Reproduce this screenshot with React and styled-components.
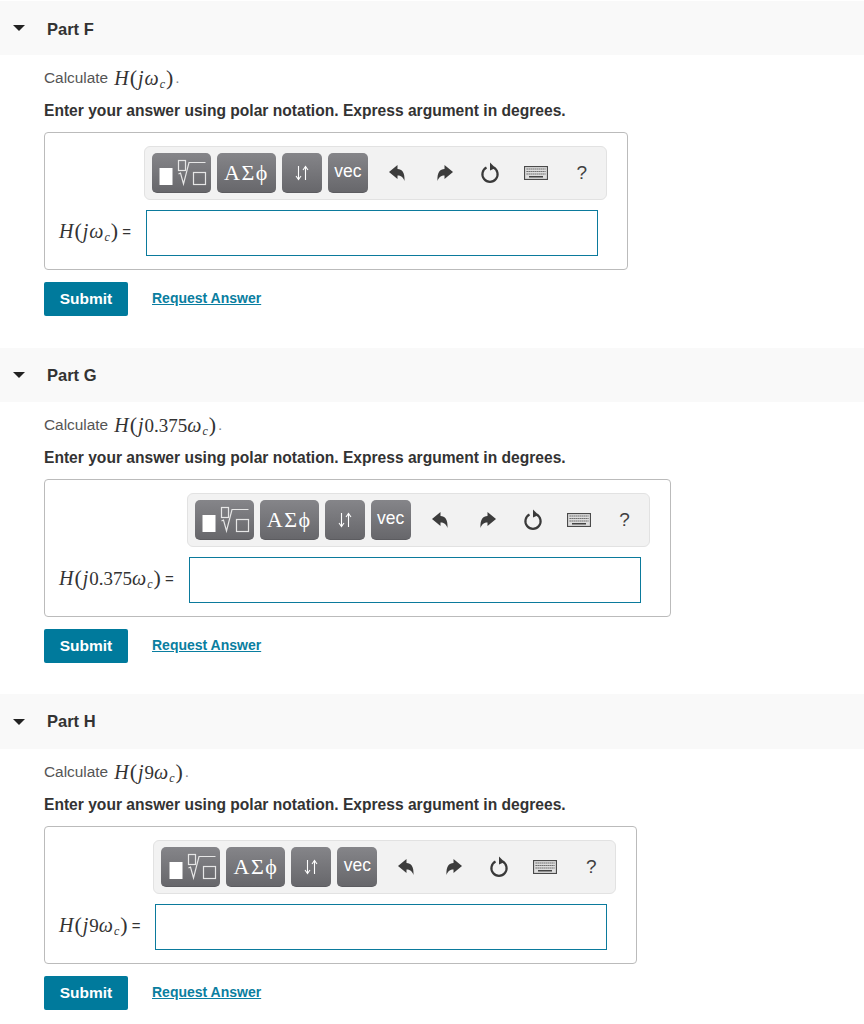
import React from 'react'
import styled, { createGlobalStyle } from 'styled-components'

const Global = createGlobalStyle`
    body{
        margin: 0;
        background: #fff;
        font-family: "Liberation Sans", Arial, sans-serif;
        color: #333;
    }
`;

const parts = [
    { name: 'Part F', number: '' },
    { name: 'Part G', number: '0.375' },
    { name: 'Part H', number: '9' },
]

const App = () =>{
    return(
        <Page>
            <Global/>
            {parts.map((part) => (
                <Part key={part.name} part={part}/>
            ))}
        </Page>
    )
}

const Part = ({part}) =>{
    return(
        <Section>
            <Header>
                <Caret/>
                <Title>{part.name}</Title>
            </Header>
            <Body>
                <Question>Calculate <Formula part={part}/><Dot>.</Dot></Question>
                <Instruction>Enter your answer using polar notation. Express argument in degrees.</Instruction>
                <AnswerBox>
                    <Toolbar>
                        <Tools/>
                    </Toolbar>
                    <Label><Formula part={part}/><Equals>=</Equals></Label>
                    <AnswerInput/>
                </AnswerBox>
                <Actions>
                    <Submit>Submit</Submit>
                    <RequestLink href="#">Request Answer</RequestLink>
                </Actions>
            </Body>
        </Section>
    )
}

const Formula = ({part}) =>{
    return(
        <MathText><I>H</I><Paren>(</Paren><I>j</I><Digits>{part.number}</Digits><I>ω</I><Sub>c</Sub><Paren>)</Paren></MathText>
    )
}

const Tools = () =>{
    return(
        <>
            <ToolButton $w={59}><TemplateIcon/></ToolButton>
            <ToolButton $w={59} $serif>ΑΣϕ</ToolButton>
            <ToolButton $w={40}><ArrowsIcon/></ToolButton>
            <ToolButton $w={40} $small>vec</ToolButton>
            <Plain $ml={8}><UndoIcon/></Plain>
            <Plain $ml={18}><RedoIcon/></Plain>
            <Plain $ml={15}><ResetIcon/></Plain>
            <Plain $ml={16}><KeyboardIcon/></Plain>
            <Help>?</Help>
        </>
    )
}

const TemplateIcon = () => (
    <svg width="52" height="34" viewBox="0 0 52 34">
        <rect x="4.500" y="12" width="13" height="17" fill="#fff"/>
        <g fill="none" stroke="#e6e6e6" strokeWidth="1.200">
            <rect x="23.500" y="4.500" width="7" height="10"/>
            <rect x="38.500" y="16.500" width="12" height="12"/>
            <path d="M23.500 18l2-1 3 11 5.500-21.500h16.500"/>
        </g>
    </svg>
)

const ArrowsIcon = () => (
    <svg width="18" height="18" viewBox="0 0 18 18" fill="none" stroke="#fff" strokeWidth="1.1">
        <path d="M5.500 2v13M3 12l2.500 3.500 2.500-3.500"/>
        <path d="M12.500 16V3M10 6l2.500-3.500 2.500 3.500"/>
    </svg>
)

const UndoIcon = () => (
    <svg width="18" height="18" viewBox="0 0 18 18">
        <path d="M1 8 9.500 1v4C14 5 17 8.500 16.500 17 15 13 13 11.500 9.500 11.500V15z" fill="#3c3c3c"/>
    </svg>
)

const RedoIcon = () => (
    <svg width="18" height="18" viewBox="0 0 18 18">
        <path d="M17 8 8.500 1v4C4 5 1 8.500 1.500 17 3 13 5 11.500 8.500 11.500V15z" fill="#3c3c3c"/>
    </svg>
)

const ResetIcon = () => (
    <svg width="20" height="22" viewBox="0 0 20 22">
        <path d="M6.500 5.500a7.600 7.600 0 1 0 7 0" fill="none" stroke="#3a3a3a" strokeWidth="2.200"/>
        <path d="M10 .5 15.500 6 10 8.500z" fill="#3a3a3a"/>
    </svg>
)

const KeyboardIcon = () => (
    <svg width="24" height="14" viewBox="0 0 24 14">
        <rect x="0.500" y="0.500" width="23" height="13" fill="#ddd" stroke="#4a4a4a" strokeWidth="1.200"/>
        <path d="M2.500 3h19M2.500 5.500h19M2.500 8h19" stroke="#555" strokeWidth="1.200" strokeDasharray="1.300 .7"/>
        <rect x="5" y="10" width="14" height="1.500" fill="#444"/>
    </svg>
)

//Styled-Components-CSS
const Page = styled.div`
    width: 864px;
    height: 1024px;
    overflow: hidden;
    padding-top: 1px;
    box-sizing: border-box;
`;

const Section = styled.section`
    height: 347px;
`;

const Header = styled.div`
    height: 54px;
    background: #f9f9f9;
    display: flex;
    align-items: center;
    padding-left: 13px;
    section:last-child > &{
        height: 55px;
        margin-top: -1px;
    }
`;

const Caret = styled.div`
    width: 0;
    height: 0;
    border-left: 6px solid transparent;
    border-right: 6px solid transparent;
    border-top: 6px solid #222;
`;

const Title = styled.h2`
    margin: 0 0 0 22px;
    font-size: 16.5px;
    font-weight: bold;
    color: #333;
    section:first-child &{
        padding-top: 2px;
    }
`;

const Body = styled.div`
    padding-left: 44px;
    section:first-child > &{
        padding-top: 1px;
    }
`;

const Question = styled.div`
    margin-top: 10px;
    height: 26px;
    display: flex;
    align-items: center;
    gap: 6px;
    font-size: 15.4px;
    color: #555;
    section:first-child &{
        margin-top: 9px;
    }
`;

const Dot = styled.span`
    margin-left: -5px;
    color: #888;
`;

const MathText = styled.span`
    font-family: "Liberation Serif", "Times New Roman", serif;
    font-size: 20px;
    letter-spacing: 1px;
    color: #333;
    white-space: nowrap;
`;

const I = styled.i`
    font-style: italic;
`;

const Digits = styled.span`
    font-size: 19px;
    letter-spacing: 0;
`;

const Sub = styled.sub`
    font-size: 12px;
    font-style: italic;
    line-height: 0;
    vertical-align: -3px;
`;

const Paren = styled.span`
    font-size: 22px;
`;

const Instruction = styled.p`
    margin: 11px 0 0;
    font-size: 15.6px;
    line-height: 18px;
    font-weight: bold;
    color: #333;
`;

const AnswerBox = styled.div`
    margin-top: 12px;
    display: inline-grid;
    grid-template-columns: auto 452px;
    align-items: center;
    column-gap: 15px;
    box-sizing: border-box;
    height: 138px;
    padding: 13px 29px 13px 14px;
    border: 1px solid #bbb;
    border-radius: 4px;
`;

const Toolbar = styled.div`
    grid-column: 2;
    margin: 0 -9px 0 -2px;
    height: 54px;
    box-sizing: border-box;
    display: flex;
    align-items: center;
    padding: 0 7px;
    background: #f2f2f2;
    border: 1px solid #e2e2e2;
    border-radius: 6px;
`;

const ToolButton = styled.div`
    width: ${props => props.$w}px;
    height: 40px;
    margin-right: 6px;
    flex: none;
    display: flex;
    align-items: center;
    justify-content: center;
    border-radius: 5px;
    background: linear-gradient(#858589, #67676b);
    border-bottom: 1px solid #5c5c60;
    box-sizing: border-box;
    color: #fff;
    font-family: ${props => props.$serif ? '"Liberation Serif", serif' : '"Liberation Sans", sans-serif'};
    font-size: ${props => props.$small ? '17.5px' : '22px'};
    letter-spacing: ${props => props.$serif ? '1.5px' : '0'};
    padding-bottom: ${props => props.$small ? '3px' : '0'};
`;

const Plain = styled.div`
    flex: none;
    width: 30px;
    display: flex;
    justify-content: center;
    margin-left: ${props => props.$ml}px;
`;

const Help = styled.div`
    flex: none;
    width: 20px;
    margin-left: 21px;
    text-align: center;
    font-size: 19px;
    color: #3f3f3f;
`;

const Label = styled.div`
    display: flex;
    align-items: center;
    gap: 3px;
    grid-column: 1;
    margin-top: 6px;
`;

const Equals = styled.span`
    font-family: "Liberation Sans", sans-serif;
    font-size: 15px;
`;

const AnswerInput = styled.div`
    grid-column: 2;
    width: 452px;
    height: 46px;
    margin-top: 10px;
    box-sizing: border-box;
    border: 1px solid #0b7a9c;
    background: #fff;
    justify-self: start;
`;

const Actions = styled.div`
    margin-top: 12px;
    display: flex;
    align-items: center;
`;

const Submit = styled.div`
    width: 84px;
    height: 34px;
    display: flex;
    align-items: center;
    justify-content: center;
    background: #007a9c;
    border-radius: 2px;
    color: #fff;
    font-size: 15.5px;
    font-weight: bold;
`;

const RequestLink = styled.a`
    margin-left: 24px;
    margin-top: -2px;
    font-size: 14px;
    font-weight: bold;
    color: #0a7ea0;
    text-decoration: underline;
`;

export default App
